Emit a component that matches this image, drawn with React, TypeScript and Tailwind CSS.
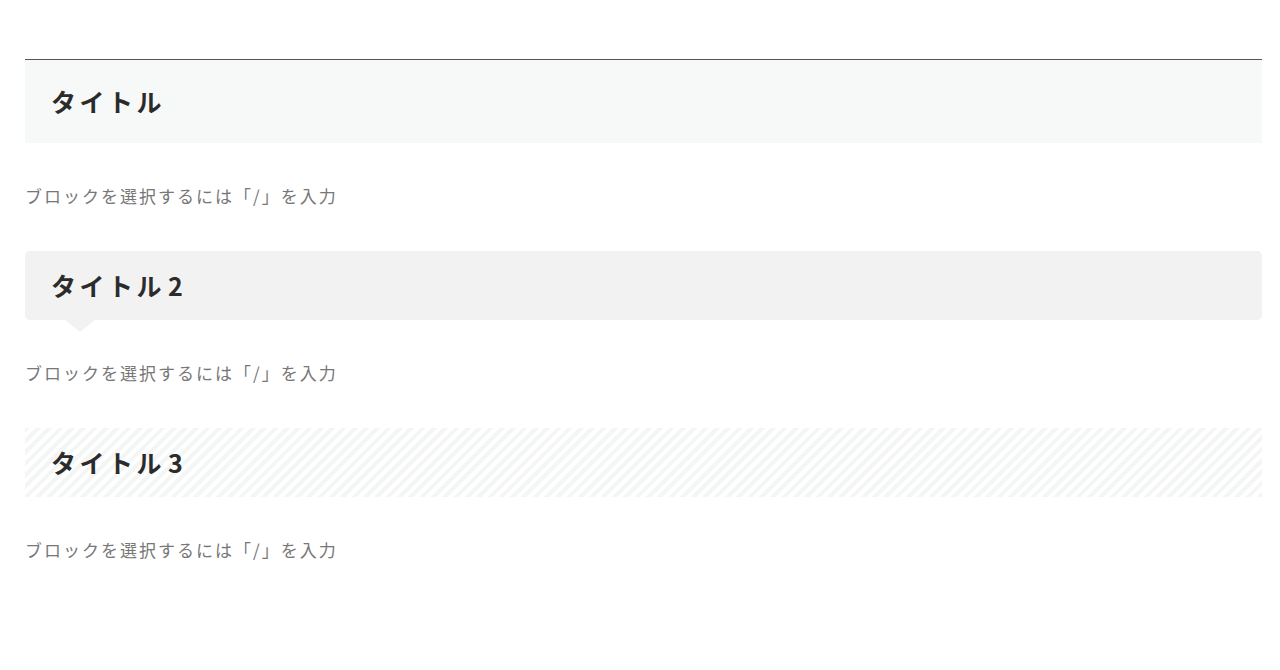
import React from 'react';

const font = { fontFamily: '"Noto Sans CJK JP", "Noto Sans", sans-serif' };

const Placeholder = () => (
  <p className="h-6 leading-6 text-[17px] tracking-[2px] text-[#777]">
    ブロックを選択するには「/」を入力
  </p>
);

export default function App() {
  return (
    <div
      className="min-h-screen bg-white pt-[59px] pl-[25px] pr-[18px]"
      style={font}
    >
      {/* heading style 1: top rule */}
      <div className="h-[84px] border-t border-[#555] bg-[#f7f9f9] flex items-center pl-[26px]">
        <h2 className="text-[25px] font-bold tracking-[3.5px] text-[#2b2b2b]">タイトル</h2>
      </div>
      <div className="mt-[41px]">
        <Placeholder />
      </div>

      {/* heading style 2: balloon */}
      <div className="relative mt-[43px] h-[69px] rounded-[5px] bg-[#f2f2f2] flex items-center pl-[26px]">
        <h2 className="text-[25px] font-bold tracking-[3.5px] text-[#2b2b2b]">
          タイトル<span className="ml-[3px]">2</span>
        </h2>
        <span className="absolute left-[40px] top-full h-0 w-0 border-x-[15px] border-t-[12px] border-x-transparent border-t-[#f2f2f2]" />
      </div>
      <div className="mt-[41px]">
        <Placeholder />
      </div>

      {/* heading style 3: stripes */}
      <div className="mt-[43px] h-[69px] bg-[repeating-linear-gradient(-45deg,#f4f6f6_0,#f4f6f6_4px,#ffffff_4px,#ffffff_8px)] flex items-center pl-[26px]">
        <h2 className="text-[25px] font-bold tracking-[3.5px] text-[#2b2b2b]">
          タイトル<span className="ml-[3px]">3</span>
        </h2>
      </div>
      <div className="mt-[41px]">
        <Placeholder />
      </div>
    </div>
  );
}
